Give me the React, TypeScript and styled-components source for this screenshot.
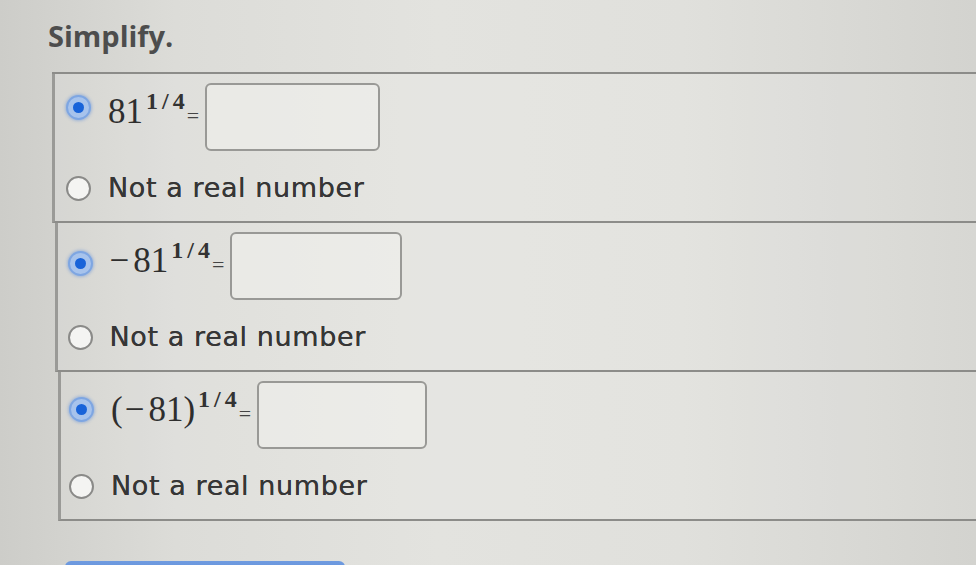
import styled, { createGlobalStyle } from "styled-components";

const GlobalStyle = createGlobalStyle`
  html, body {
    margin: 0;
    padding: 0;
    height: 565px;
    overflow: hidden;
  }
  body {
    background: linear-gradient(90deg, #cdcdc9 0%, #dcdcd8 18%, #e3e3df 45%, #e0e0dc 70%, #d3d3cf 100%);
    font-family: "DejaVu Sans", Verdana, sans-serif;
  }
`;

const Page = styled.div`
  display: flex;
  flex-direction: column;
  padding-top: 16px;
`;

const Title = styled.h1`
  margin: 0 0 16px 48px;
  font-family: "Open Sans", "Liberation Sans", sans-serif;
  font-weight: 700;
  font-size: 29px;
  line-height: 40px;
  color: #4d4d4d;
`;

const Box = styled.div`
  display: flex;
  flex-direction: column;
  margin-left: 52px;
  border-top: 2px solid #8c8c89;
`;

const Section = styled.div<{ $shift: number }>`
  display: flex;
  flex-direction: column;
  gap: 22px;
  margin-left: ${(p) => p.$shift}px;
  padding: 9px 0 18px ${(p) => 11 - p.$shift / 2}px;
  border-left: 3px solid #9a9a97;
  border-bottom: 2px solid #8c8c89;
  background: rgba(255, 255, 255, 0.1);
`;

const Row = styled.div`
  display: flex;
  align-items: center;
`;

const Radio = styled.span<{ $checked?: boolean; $lift?: number }>`
  box-sizing: border-box;
  flex: none;
  width: 25px;
  height: 25px;
  border-radius: 50%;
  margin-right: 17px;
  margin-bottom: ${(p) => p.$lift ?? 0}px;
  display: flex;
  align-items: center;
  justify-content: center;
  background: ${(p) => (p.$checked ? "#a7c3ec" : "#f4f4f2")};
  border: 2px solid ${(p) => (p.$checked ? "#7ea6e2" : "#8a8a88")};
  box-shadow: ${(p) => (p.$checked ? "0 0 3px 1px rgba(90,140,220,0.45)" : "none")};

  &::after {
    content: "";
    display: ${(p) => (p.$checked ? "block" : "none")};
    width: 11px;
    height: 11px;
    border-radius: 50%;
    background: #1863d9;
  }
`;

const Expr = styled.span`
  display: inline-block;
  white-space: nowrap;
  font-family: "Liberation Serif", "Times New Roman", serif;
  font-size: 35px;
  line-height: 40px;
  color: #2e2e2e;
  margin-bottom: 6px;
`;

const Glyph = styled.span<{ $gap?: number }>`
  margin-right: ${(p) => p.$gap ?? 0}px;
`;

const Sup = styled.span`
  font-size: 24px;
  font-weight: 700;
  line-height: 0;
  letter-spacing: 4px;
  vertical-align: 14px;
  margin-left: 3px;
  color: #333;
`;

const Equals = styled.span`
  font-size: 22px;
  margin: 0 6px 0 -2px;
  color: #444;
`;

const AnswerInput = styled.input<{ $w: number }>`
  box-sizing: border-box;
  width: ${(p) => p.$w}px;
  height: 68px;
  border: 2px solid #999996;
  border-radius: 6px;
  background: rgba(240, 240, 236, 0.6);
  outline: none;
`;

const Label = styled.span`
  font-size: 27px;
  line-height: 30px;
  letter-spacing: 0.6px;
  color: #363636;
  text-shadow: 0 0 0.6px #363636;
`;

const SubmitBar = styled.div`
  margin: 40px 0 0 65px;
  width: 280px;
  height: 40px;
  border-radius: 6px;
  background: linear-gradient(180deg, #6f9be0 0%, #4b80d0 100%);
`;

type Item = {
  prefix: string[];
  input: number;
  lift: number;
  shift: number;
};

const items: Item[] = [
  { prefix: ["81"], input: 175, lift: 20, shift: 0 },
  { prefix: ["\u2212", "81"], input: 172, lift: 6, shift: 3 },
  { prefix: ["(", "\u2212", "81", ")"], input: 170, lift: 12, shift: 6 },
];

export default function App() {
  return (
    <>
      <GlobalStyle />
      <Page>
        <Title>Simplify.</Title>
        <Box>
          {items.map((it, i) => (
            <Section key={i} $shift={it.shift}>
              <Row>
                <Radio $checked $lift={it.lift} />
                <Expr>
                  {it.prefix.map((g, j) => (
                    <Glyph key={j} $gap={g === "\u2212" ? 4 : g === "(" ? 2 : 0}>
                      {g}
                    </Glyph>
                  ))}
                  <Sup>1/4</Sup>
                  <Equals>=</Equals>
                </Expr>
                <AnswerInput $w={it.input} />
              </Row>
              <Row>
                <Radio />
                <Label>Not a real number</Label>
              </Row>
            </Section>
          ))}
        </Box>
        <SubmitBar />
      </Page>
    </>
  );
}
